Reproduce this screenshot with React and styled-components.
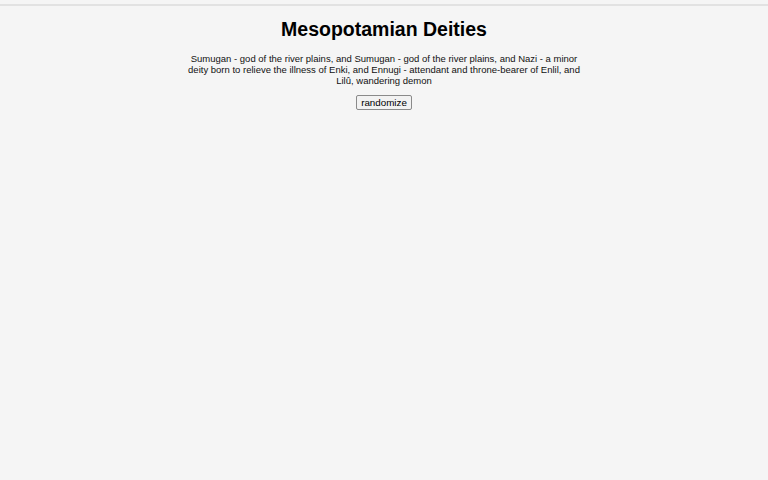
import React, { useState } from "react";
import styled, { createGlobalStyle } from "styled-components";

const Global = createGlobalStyle`
  html, body {
    margin: 0;
    padding: 0;
    background: #f5f5f5;
    font-family: "Liberation Sans", Arial, sans-serif;
    color: #000;
  }
`;

const Page = styled.div`
  margin-top: 4px;
  border-top: 2px solid #e2e2e2;
  min-height: 474px;
  display: flex;
  flex-direction: column;
  align-items: center;
`;

const Title = styled.h1`
  margin: 12px 0 0;
  font-size: 19.5px;
  line-height: 23px;
  font-weight: bold;
  text-align: center;
`;

const Description = styled.p`
  margin: 12px 0 0;
  max-width: 400px;
  font-size: 9.5px;
  line-height: 11px;
  text-align: center;
  color: #111;
`;

const Button = styled.button`
  margin-top: 9px;
  font-family: "Liberation Sans", Arial, sans-serif;
  font-size: 9.8px;
  line-height: 11px;
  padding: 1px 4px;
  background: #f2f2f2;
  border: 1px solid #8a8a8a;
  border-radius: 2px;
  color: #000;
`;

const text =
  "Sumugan - god of the river plains, and Sumugan - god of the river plains, and Nazi - a minor deity born to relieve the illness of Enki, and Ennugi - attendant and throne-bearer of Enlil, and Lilû, wandering demon";

export default function App() {
  const [desc] = useState(text);
  return (
    <>
      <Global />
      <Page>
        <Title>Mesopotamian Deities</Title>
        <Description>{desc}</Description>
        <Button>randomize</Button>
      </Page>
    </>
  );
}
